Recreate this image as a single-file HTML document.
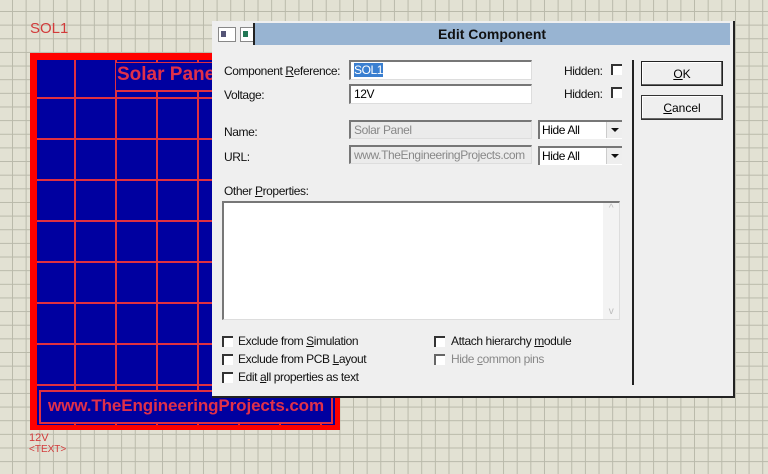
<!DOCTYPE html>
<html><head><meta charset="utf-8"><style>
body{margin:0;width:768px;height:474px;overflow:hidden;position:relative;font-family:"Liberation Sans",sans-serif;
background-color:#e2e1d3;
background-image:linear-gradient(to right,#b9b9aa 1px,transparent 1px),linear-gradient(to bottom,#b9b9aa 1px,transparent 1px);
background-size:13.65px 13.65px;background-position:12px 11px;}
.a{position:absolute}
.t{font-size:12px;color:#111;letter-spacing:-0.4px}
.inp{position:absolute;background:#fff;border-top:2px solid #777;border-left:2px solid #777;border-bottom:1px solid #ddd;border-right:1px solid #ddd;box-sizing:border-box;font-size:12px;padding:1px 3px;letter-spacing:-0.4px;white-space:nowrap;overflow:hidden}
.dis{background:#ebebeb;color:#888}
.cb{position:absolute;width:11px;height:11px;border-top:2px solid #333;border-left:2px solid #333;box-sizing:border-box;background:#fff}
.btn{position:absolute;width:82px;height:25px;border:1px solid #222;box-shadow:inset -1px -1px #666,inset 1px 1px #fff;background:#efefef;font-size:12px;text-align:center;line-height:24px;box-sizing:border-box}
.sel{position:absolute;width:84px;height:19px;background:#fff;border-top:2px solid #777;border-left:2px solid #777;box-sizing:border-box;font-size:12px;padding:1px 2px;letter-spacing:-0.4px}
.sel i{position:absolute;right:0;top:0;width:15px;height:16px;background:#eee;border-left:1px solid #ccc}
.sel i:after{content:"";position:absolute;left:4px;top:6px;border:4px solid transparent;border-top:4px solid #111}
</style></head><body>
<div class="a" style="left:30px;top:20px;font-size:15px;color:#d23a3a">SOL1</div>
<div class="a" style="left:30px;top:53px;width:310px;height:377px;background:#f00"></div>
<div class="a" style="left:37px;top:60px;width:298px;height:365px;background:#0000a0;
background-image:linear-gradient(to right,#e03040 2px,transparent 2px),linear-gradient(to bottom,#e03040 2px,transparent 2px);background-size:41px 41px;background-position:37px 37px;"></div>
<div class="a" style="left:115px;top:62px;width:220px;height:27px;background:#0000a0;border:1px solid #e03040;border-bottom:2px solid #e03040"></div>
<div class="a" style="left:117px;top:64px;font-size:19px;font-weight:bold;color:#e0304a">Solar Panel</div>
<div class="a" style="left:39px;top:390px;width:290px;height:30px;background:#0000a0;border:2px solid #e03040"></div>
<div class="a" style="left:48px;top:396px;font-size:17px;font-weight:bold;color:#e0304a;letter-spacing:-0.1px">www.TheEngineeringProjects.com</div>
<div class="a" style="left:29px;top:432px;font-size:11px;color:#d23a3a">12V</div>
<div class="a" style="left:29px;top:444px;font-size:10px;color:#d23a3a">&lt;TEXT&gt;</div>

<div class="a" style="left:212px;top:21px;width:521px;height:375px;background:#efefef;border-right:2px solid #222;border-bottom:2px solid #222"></div>
<div class="a" style="left:254px;top:23px;width:476px;height:22px;background:#98b4d2;text-align:center;font-size:14px;font-weight:bold;line-height:22px;color:#111">Edit Component</div>
<div class="a" style="left:218px;top:27px;width:16px;height:13px;background:#fff;border:1px solid #888"><div class="a" style="left:2px;top:3px;width:5px;height:6px;background:#557"></div></div>
<div class="a" style="left:240px;top:27px;width:13px;height:13px;background:#fff;border:1px solid #888"><div class="a" style="left:2px;top:3px;width:5px;height:6px;background:#275"></div></div>
<div class="a" style="left:253px;top:23px;width:2px;height:22px;background:#222"></div>
<div class="a" style="left:632px;top:60px;width:2px;height:325px;background:#222"></div>

<div class="a t" style="left:224px;top:64px"><span>Component <u>R</u>eference:</span></div>
<div class="inp" style="left:349px;top:60px;width:183px;height:20px"><span style="background:#3a7fd0;color:#fff">SOL1</span></div>
<div class="a t" style="left:224px;top:88px">Voltage:</div>
<div class="inp" style="left:349px;top:84px;width:183px;height:20px">12V</div>
<div class="a t" style="left:564px;top:64px">Hidden:</div><div class="cb" style="left:611px;top:64px"></div>
<div class="a t" style="left:564px;top:87px">Hidden:</div><div class="cb" style="left:611px;top:87px"></div>
<div class="btn" style="left:641px;top:61px"><u>O</u>K</div>
<div class="btn" style="left:641px;top:95px;border-color:#333"><u>C</u>ancel</div>

<div class="a t" style="left:224px;top:125px">Name:</div>
<div class="inp dis" style="left:349px;top:120px;width:183px;height:19px">Solar Panel</div>
<div class="sel" style="left:538px;top:120px">Hide All<i></i></div>
<div class="a t" style="left:224px;top:150px">URL:</div>
<div class="inp dis" style="left:349px;top:145px;width:183px;height:19px">www.TheEngineeringProjects.com</div>
<div class="sel" style="left:538px;top:146px">Hide All<i></i></div>

<div class="a t" style="left:224px;top:184px">Other <u>P</u>roperties:</div>
<div class="inp" style="left:222px;top:201px;width:398px;height:119px;padding:0"><div class="a" style="right:0;top:0;width:16px;height:116px;background:#f3f3f3;color:#bbb;font-size:10px;text-align:center">^<div style="position:absolute;bottom:2px;width:16px">v</div></div></div>

<div class="cb" style="left:222px;top:336px"></div><div class="a t" style="left:238px;top:334px">Exclude from <u>S</u>imulation</div>
<div class="cb" style="left:222px;top:354px"></div><div class="a t" style="left:238px;top:352px">Exclude from PCB <u>L</u>ayout</div>
<div class="cb" style="left:222px;top:372px"></div><div class="a t" style="left:238px;top:370px">Edit <u>a</u>ll properties as text</div>
<div class="cb" style="left:434px;top:336px"></div><div class="a t" style="left:451px;top:334px">Attach hierarchy <u>m</u>odule</div>
<div class="cb" style="left:434px;top:354px;border-color:#666"></div><div class="a t" style="left:451px;top:352px;color:#888">Hide <u>c</u>ommon pins</div>
</body></html>
